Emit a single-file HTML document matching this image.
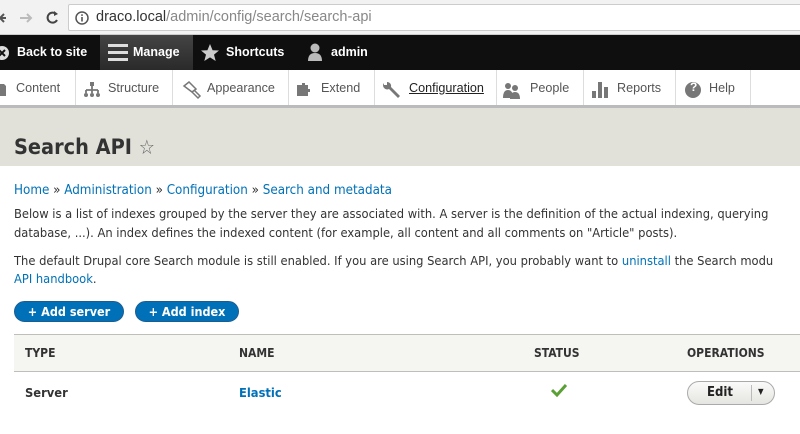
<!DOCTYPE html>
<html><head><style>
*{box-sizing:border-box;margin:0;padding:0}
body{width:800px;height:434px;overflow:hidden;background:#fff;font-family:"DejaVu Sans Condensed","Liberation Sans",sans-serif;position:relative;color:#222}
.abs{position:absolute}
#chrome{left:0;top:0;width:800px;height:35px;background:#f2f2f2;border-bottom:1px solid #ccc}
#url{left:68px;top:4px;width:740px;height:27px;background:#fff;border:1px solid #ccc;border-radius:2px;font-family:"Liberation Sans",sans-serif;font-size:14.5px;line-height:25px;padding-left:27px;color:#888}
#url b{font-weight:normal;color:#333}
#tb{left:0;top:35px;width:800px;height:35px;background:#0f0f0f;font-family:"Liberation Sans",sans-serif;font-weight:bold;font-size:12.5px;color:#fff}
#tb span{position:absolute;top:10px}
#manage{left:100px;top:0;width:93px;height:35px;background:linear-gradient(#444,#2a2a2a)}
#tray{left:0;top:70px;width:800px;height:38px;background:#fff;border-bottom:3px solid #bbb;font-family:"Liberation Sans",sans-serif;font-size:12.6px;color:#555}
#tray .i{position:absolute;top:0;height:35px;border-right:1px solid #ddd}
#tray span{position:absolute;top:11px}
#hdr{left:0;top:108px;width:800px;height:58px;background:#e1e1da}
h1{position:absolute;left:14px;top:135px;font-size:21.5px;font-weight:bold;color:#333;font-family:"DejaVu Sans Condensed","Liberation Sans",sans-serif}
.t{position:absolute;left:14px;font-size:12.8px;white-space:nowrap;color:#333}
a{color:#0071b8;text-decoration:none}
.btn{position:absolute;top:301px;height:21px;background:#0071b8;border-radius:11px;color:#fff;font-weight:bold;font-size:12.5px;line-height:20px;text-align:center;border:1px solid #1e5c90}
#th{left:14px;top:334px;width:800px;height:38px;background:#f5f5f2;border-top:1px solid #bfbfba;border-bottom:1px solid #bfbfba}
.h{position:absolute;top:346px;font-size:12px;font-weight:bold;color:#333}
.c{position:absolute;top:386px;font-size:12.8px;font-weight:bold;color:#333}
#edit{left:687px;top:381px;width:88px;height:24px;border:1px solid #aaa;border-radius:12px;background:linear-gradient(#fafafa,#e5e5e0);font-weight:bold;font-size:13px}
</style></head><body>
<div id="chrome" class="abs">
<svg class="abs" style="left:0;top:8px" width="60" height="20"><path d="M6 10H0M4 6L0 10L4 14" stroke="#555" stroke-width="2" fill="none"/><path d="M20 10H31M27 6L31 10L27 14" stroke="#bbb" stroke-width="2" fill="none"/><path d="M56 6A5 5 0 1 0 57 12" stroke="#444" stroke-width="2" fill="none"/><path d="M54 3L58 6L54 8Z" fill="#444"/></svg>
</div>
<div id="url" class="abs"><svg class="abs" style="left:6px;top:6px" width="14" height="14"><circle cx="7" cy="7" r="6" stroke="#555" stroke-width="1.5" fill="none"/><rect x="6.2" y="6" width="1.6" height="4.5" fill="#555"/><rect x="6.2" y="3.3" width="1.6" height="1.6" fill="#555"/></svg><b>draco.local</b>/admin/config/search/search-api</div>
<div id="tb" class="abs">
<div id="manage" class="abs"></div>
<svg class="abs" style="left:-6px;top:10px" width="16" height="16"><circle cx="8" cy="8" r="7" fill="#ddd"/><path d="M5 5L11 11M11 5L5 11" stroke="#111" stroke-width="2"/></svg>
<span style="left:17px">Back to site</span>
<svg class="abs" style="left:108px;top:9px" width="20" height="17"><rect y="0" width="20" height="3" fill="#ddd"/><rect y="7" width="20" height="3" fill="#ddd"/><rect y="14" width="20" height="3" fill="#ddd"/></svg>
<span style="left:133px">Manage</span>
<svg class="abs" style="left:200px;top:8px" width="20" height="19"><path d="M10 1L12.6 7.2 19 7.5 14 11.6 15.7 18 10 14.4 4.3 18 6 11.6 1 7.5 7.4 7.2Z" fill="#ccc"/></svg>
<span style="left:226px">Shortcuts</span>
<svg class="abs" style="left:306px;top:8px" width="18" height="19"><circle cx="9" cy="5" r="4.5" fill="#bbb"/><path d="M2 18Q2 10 9 10Q16 10 16 18Z" fill="#bbb"/></svg>
<span style="left:331px">admin</span>
</div>
<div id="tray" class="abs">
<div class="i" style="left:0;width:76px"></div><div class="i" style="left:76px;width:97px"></div><div class="i" style="left:173px;width:116px"></div><div class="i" style="left:289px;width:86px"></div><div class="i" style="left:375px;width:122px"></div><div class="i" style="left:497px;width:87px"></div><div class="i" style="left:584px;width:92px"></div><div class="i" style="left:676px;width:75px"></div>
<svg class="abs" style="left:0;top:10px" width="800" height="20" fill="#777">
<path d="M0 4H4L6 6V16H0Z"/>
<rect x="90" y="2" width="4" height="4"/><path d="M92 6V10M86 10H98M86 10V13M92 10V13M98 10V13" stroke="#777" stroke-width="1.8" fill="none"/><circle cx="86" cy="15" r="2"/><circle cx="92" cy="15" r="2"/><circle cx="98" cy="15" r="2"/>
<path d="M184 6L189 2 196 9 192 12ZM192 12L198 18 200 16 194 10" stroke="#777" stroke-width="1.5" fill="none"/>
<path d="M297 5H302V3H305V5H308V9H310V12H308V16H297Z"/>
<path d="M384 3A4 4 0 0 0 389 9L398 18 400 16 391 7A4 4 0 0 0 387 2L387 5 384 5Z"/>
<circle cx="508" cy="6" r="3"/><path d="M503 18Q503 10 508 10Q513 10 513 18Z"/><circle cx="515" cy="8" r="3"/><path d="M510 19Q510 12 515 12Q520 12 520 19Z"/>
<rect x="592" y="11" width="4" height="7"/><rect x="598" y="2" width="4" height="16"/><rect x="604" y="7" width="4" height="11"/>
<circle cx="693" cy="10" r="8"/>
</svg>
<span style="left:690px;top:10px;color:#fff;font-weight:bold;font-size:12px">?</span>
<span style="left:16px">Content</span><span style="left:108px">Structure</span><span style="left:207px">Appearance</span><span style="left:321px">Extend</span><span style="left:409px;color:#222;text-decoration:underline">Configuration</span><span style="left:530px">People</span><span style="left:617px">Reports</span><span style="left:709px">Help</span>
</div>
<div id="hdr" class="abs"></div>
<h1>Search API <span style="font-weight:normal;color:#666;font-size:20px">☆</span></h1>
<div class="t" style="top:183px;font-size:13.3px"><a href="#">Home</a> » <a href="#">Administration</a> » <a href="#">Configuration</a> » <a href="#">Search and metadata</a></div>
<div class="t" style="top:207px">Below is a list of indexes grouped by the server they are associated with. A server is the definition of the actual indexing, querying</div>
<div class="t" style="top:226px">database, ...). An index defines the indexed content (for example, all content and all comments on "Article" posts).</div>
<div class="t" style="top:254px">The default Drupal core Search module is still enabled. If you are using Search API, you probably want to <a href="#">uninstall</a> the Search modu</div>
<div class="t" style="top:272px"><a href="#">API handbook</a>.</div>
<div class="btn" style="left:14px;width:110px">+ Add server</div>
<div class="btn" style="left:135px;width:104px">+ Add index</div>
<div id="th" class="abs"></div>
<div class="h" style="left:25px">TYPE</div><div class="h" style="left:239px">NAME</div><div class="h" style="left:534px">STATUS</div><div class="h" style="left:687px">OPERATIONS</div>
<div class="c" style="left:25px">Server</div><div class="c" style="left:239px;color:#0071b8">Elastic</div>
<svg class="abs" style="left:551px;top:383px" width="16" height="14"><path d="M1 7L6 12 15 2" stroke="#5aa035" stroke-width="3" fill="none"/></svg>
<div id="edit" class="abs"><span class="abs" style="left:19px;top:3px">Edit</span><div class="abs" style="left:63px;top:3px;width:1px;height:16px;background:#bbb"></div><span class="abs" style="left:70px;top:5px;font-size:8px">▼</span></div>
</body></html>
